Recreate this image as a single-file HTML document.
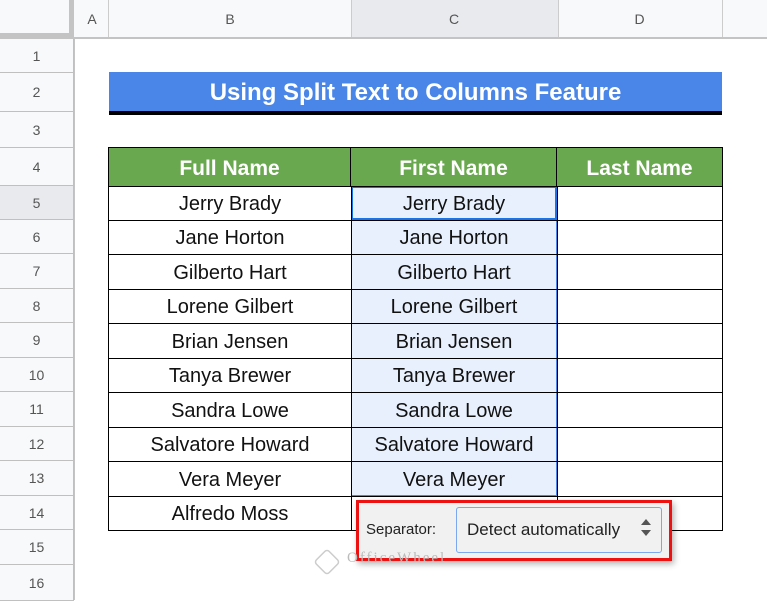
<!DOCTYPE html>
<html><head><style>
body{margin:0;width:767px;height:600px;overflow:hidden;background:#fff;font-family:"Liberation Sans",Arial,sans-serif;position:relative}
.a{position:absolute}
.hdr{color:#555;font-size:14px;text-align:center}
.rn{left:0;width:73px;border-bottom:1px solid #c0c0c0;border-right:1px solid #c0c0c0;background:#f8f9fa;color:#555;font-size:14px;display:flex;align-items:center;justify-content:center}
.cell{display:flex;align-items:center;justify-content:center;font-size:20px;color:#111;box-sizing:border-box;padding-top:3px}
</style></head><body>
<div class="a" style="left:0;top:0;width:767px;height:37px;background:#f8f9fa;border-bottom:2px solid #c4c4c4"></div>
<div class="a" style="left:0;top:0;width:69px;height:33px;border-right:5px solid #c4c4c4;border-bottom:5px solid #c4c4c4;background:#f8f9fa"></div>
<div class="a hdr" style="left:75px;top:11px;width:34px">A</div>
<div class="a" style="left:108px;top:0;width:1px;height:37px;background:#ccc"></div>
<div class="a hdr" style="left:109px;top:11px;width:242px">B</div>
<div class="a" style="left:351px;top:0;width:206px;height:37px;background:#e8eaed;border-left:1px solid #ccc;border-right:1px solid #ccc"></div>
<div class="a hdr" style="left:351px;top:11px;width:206px">C</div>
<div class="a hdr" style="left:557px;top:11px;width:165px">D</div>
<div class="a" style="left:722px;top:0;width:1px;height:37px;background:#ccc"></div>
<div class="a" style="left:73px;top:37px;width:2px;height:563px;background:#c4c4c4"></div>
<div class="a rn" style="top:39px;height:33px">1</div>
<div class="a rn" style="top:73px;height:38px">2</div>
<div class="a rn" style="top:112px;height:35px">3</div>
<div class="a rn" style="top:148px;height:37px">4</div>
<div class="a rn" style="top:186px;height:33px;background:#e8eaed">5</div>
<div class="a rn" style="top:220px;height:33px">6</div>
<div class="a rn" style="top:254px;height:34px">7</div>
<div class="a rn" style="top:289px;height:33px">8</div>
<div class="a rn" style="top:323px;height:34px">9</div>
<div class="a rn" style="top:358px;height:33px">10</div>
<div class="a rn" style="top:392px;height:34px">11</div>
<div class="a rn" style="top:427px;height:33px">12</div>
<div class="a rn" style="top:461px;height:34px">13</div>
<div class="a rn" style="top:496px;height:33px">14</div>
<div class="a rn" style="top:530px;height:34px">15</div>
<div class="a rn" style="top:565px;height:35px">16</div>
<div class="a cell" style="left:109px;top:72px;width:613px;height:39px;background:#4a86e8;color:#fff;font-weight:bold;font-size:24px">Using Split Text to Columns Feature</div>
<div class="a" style="left:109px;top:111px;width:613px;height:4px;background:#000"></div>
<div class="a" style="left:108px;top:147px;width:615px;height:384px;border:1px solid #000;box-sizing:border-box"></div>
<div class="a cell" style="left:109px;top:148px;width:242px;height:38px;background:#6aa84f;color:#fff;font-weight:bold;font-size:21px;border-right:1px solid #000">Full Name</div>
<div class="a cell" style="left:351px;top:148px;width:206px;height:38px;background:#6aa84f;color:#fff;font-weight:bold;font-size:21px;border-right:1px solid #000">First Name</div>
<div class="a cell" style="left:557px;top:148px;width:165px;height:38px;background:#6aa84f;color:#fff;font-weight:bold;font-size:21px">Last Name</div>
<div class="a" style="left:351px;top:186px;width:206px;height:310px;background:#e8f0fd;border:1px solid #4a86e8;box-sizing:border-box"></div>
<div class="a" style="left:351px;top:186px;width:206px;height:34px;border:2px solid #1a73e8;box-sizing:border-box"></div>
<div id="rows"></div>
<script>
var n=["Jerry Brady","Jane Horton","Gilberto Hart","Lorene Gilbert","Brian Jensen","Tanya Brewer","Sandra Lowe","Salvatore Howard","Vera Meyer","Alfredo Moss"];
var t=[186,220,254,289,323,358,392,427,461,496],h="";
for(var i=0;i<10;i++){var y=t[i],hh=(i<9?t[i+1]:530)-y;
h+='<div class="a" style="left:109px;top:'+(y)+'px;width:613px;height:1px;background:#000"></div>';
h+='<div class="a cell" style="left:109px;top:'+y+'px;width:242px;height:'+hh+'px">'+n[i]+'</div>';
if(i<9)h+='<div class="a cell" style="left:351px;top:'+y+'px;width:206px;height:'+hh+'px">'+n[i]+'</div>';}
h+='<div class="a" style="left:351px;top:186px;width:1px;height:344px;background:#000"></div>';
h+='<div class="a" style="left:557px;top:186px;width:1px;height:344px;background:#000"></div>';
document.getElementById("rows").innerHTML=h;
</script>
<div class="a" style="left:356px;top:500px;width:316px;height:61px;background:#f1f1f1;border:3px solid #ee1111;box-sizing:border-box;box-shadow:2px 3px 6px rgba(0,0,0,.3)"></div>
<div class="a" style="left:366px;top:521px;font-size:15px;color:#222">Separator:</div>
<div class="a" style="left:456px;top:507px;width:206px;height:46px;border:1px solid #7aa7f0;border-radius:3px;box-sizing:border-box;background:#f1f1f1"></div>
<div class="a" style="left:467px;top:520px;font-size:17px;color:#222">Detect automatically</div>
<div class="a" style="left:641px;top:519px;width:0;height:0;border-left:5px solid transparent;border-right:5px solid transparent;border-bottom:6px solid #555"></div>
<div class="a" style="left:641px;top:530px;width:0;height:0;border-left:5px solid transparent;border-right:5px solid transparent;border-top:6px solid #555"></div>
<div class="a" style="left:347px;top:550px;font-family:'Liberation Serif',serif;font-size:15px;letter-spacing:2px;color:#bbb">OfficeWheel</div>
<div class="a" style="left:314px;top:549px;width:22px;height:22px;border:2px solid #ccc;border-radius:5px;transform:rotate(45deg) scale(.75)"></div>
</body></html>
